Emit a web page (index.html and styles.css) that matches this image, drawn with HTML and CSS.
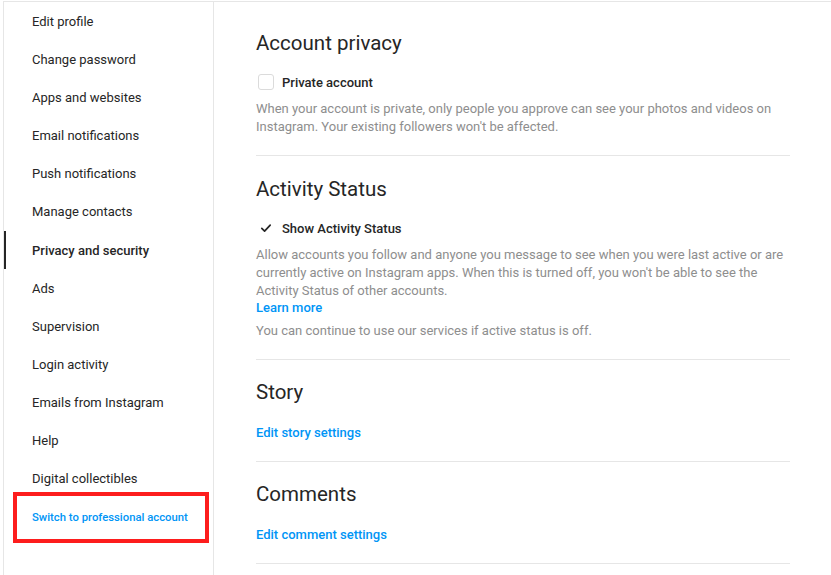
FILE: index.html
```html
<!DOCTYPE html>
<html lang="en">
<head>
    <meta charset="UTF-8">
    <meta name="viewport" content="width=device-width, initial-scale=1.0">
    <title>Privacy and security</title>
    <link rel="stylesheet" href="styles.css">
</head>
<body>
    <div class="page">
        <!-- Settings menu -->
        <nav class="sidebar">
            <a class="nav-item" href="#">Edit profile</a>
            <a class="nav-item" href="#">Change password</a>
            <a class="nav-item" href="#">Apps and websites</a>
            <a class="nav-item" href="#">Email notifications</a>
            <a class="nav-item" href="#">Push notifications</a>
            <a class="nav-item" href="#">Manage contacts</a>
            <a class="nav-item active" href="#">Privacy and security</a>
            <a class="nav-item" href="#">Ads</a>
            <a class="nav-item" href="#">Supervision</a>
            <a class="nav-item" href="#">Login activity</a>
            <a class="nav-item" href="#">Emails from Instagram</a>
            <a class="nav-item" href="#">Help</a>
            <a class="nav-item" href="#">Digital collectibles</a>
            <a class="nav-item pro" href="#">Switch to professional account</a>
        </nav>

        <main class="content">
            <section class="section">
                <h2>Account privacy</h2>
                <label class="check-row">
                    <span class="checkbox"></span>
                    <span class="check-label">Private account</span>
                </label>
                <p class="desc">When your account is private, only people you approve can see your photos and videos on Instagram. Your existing followers won't be affected.</p>
            </section>

            <section class="section activity">
                <h2>Activity Status</h2>
                <label class="check-row">
                    <span class="checkbox checked">
                        <svg width="14" height="14" viewBox="0 0 14 14"><path d="M2.8 7.3l2.8 2.8 5.6-6" fill="none" stroke="#262626" stroke-width="1.7" stroke-linecap="round" stroke-linejoin="round"/></svg>
                    </span>
                    <span class="check-label">Show Activity Status</span>
                </label>
                <p class="desc">Allow accounts you follow and anyone you message to see when you were last active or are currently active on Instagram apps. When this is turned off, you won't be able to see the Activity Status of other accounts.</p>
                <a class="link learn" href="#">Learn more</a>
                <p class="desc note">You can continue to use our services if active status is off.</p>
            </section>

            <section class="section">
                <h2>Story</h2>
                <a class="link" href="#">Edit story settings</a>
            </section>

            <section class="section">
                <h2>Comments</h2>
                <a class="link" href="#">Edit comment settings</a>
            </section>
        </main>
    </div>
</body>
</html>
```

FILE: styles.css
```css
body {
    font-family: Roboto, "Liberation Sans", sans-serif;
    margin: 0;
    padding: 1px 0 0 3px;
    background-color: #ffffff;
    color: #262626;
    overflow: hidden;
    height: 575px;
    box-sizing: border-box;
}
.page {
    display: flex;
    width: 828px;
    height: 574px;
    border: 1px solid #e6e6e6;
    border-right: none;
    border-bottom: none;
    box-sizing: border-box;
}
.sidebar {
    width: 209px;
    flex-shrink: 0;
    border-right: 1px solid #e6e6e6;
    display: flex;
    flex-direction: column;
}
.nav-item {
    height: 38.17px;
    flex-shrink: 0;
    display: flex;
    align-items: center;
    padding-left: 26px;
    border-left: 2px solid transparent;
    font-size: 13px;
    color: #262626;
    text-decoration: none;
    white-space: nowrap;
}
.nav-item.active {
    border-left-color: #262626;
    font-weight: 500;
}
.nav-item.pro {
    height: 51px;
    box-sizing: border-box;
    margin: -6px 4px 0 9px;
    padding-left: 15px;
    border: 4px solid #fd1d1d;
    color: #0095f6;
    font-size: 11.3px;
    font-weight: 500;
}
.content {
    width: 534px;
    padding: 28px 0 0 42px;
}
.section {
    padding: 19px 0 19px;
    border-bottom: 1px solid #e6e6e6;
}
.section:first-child {
    padding-top: 0;
}
.section.activity {
    padding-top: 20px;
}
h2 {
    margin: 0 0 19px;
    font-size: 20.5px;
    line-height: 26px;
    font-weight: 400;
}
.activity h2 {
    margin-bottom: 18px;
}
.check-row {
    display: flex;
    align-items: center;
    height: 18px;
    margin-top: -1px;
}
.section:first-child .check-row {
    margin-top: -2px;
}
.checkbox {
    width: 14px;
    height: 14px;
    margin: 0 8px 0 2px;
    border: 1px solid #dbdbdb;
    border-radius: 3px;
    display: flex;
    align-items: center;
    justify-content: center;
}
.checkbox.checked {
    border-color: transparent;
}
.check-label {
    font-size: 13px;
    font-weight: 500;
}
.desc {
    margin: 9px 0 0;
    font-size: 13px;
    line-height: 18px;
    color: #8e8e8e;
}
.desc.note {
    margin-top: 6px;
}
.link {
    display: block;
    font-size: 13px;
    line-height: 18px;
    font-weight: 500;
    color: #0095f6;
    text-decoration: none;
}
.learn {
    line-height: 16px;
}
```
